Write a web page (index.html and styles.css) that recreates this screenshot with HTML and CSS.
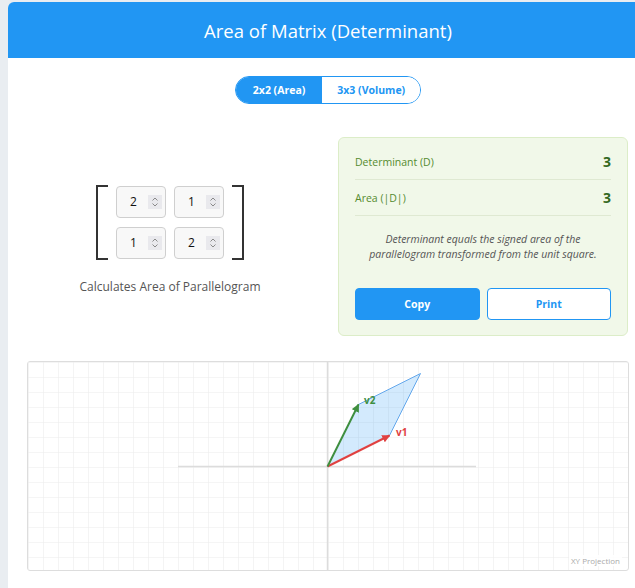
FILE: index.html
```html
<!DOCTYPE html>
<html lang="en">
<head>
<meta charset="utf-8">
<title>Area of Matrix (Determinant)</title>
<link rel="stylesheet" href="styles.css">
</head>
<body>
<div class="card">
  <header class="card-header">
    <h1 class="title">Area of Matrix (Determinant)</h1>
  </header>
  <div class="card-body">
    <div class="toggle-wrap">
      <div class="mode-toggle">
        <button class="mode active">2x2 (Area)</button>
        <button class="mode">3x3 (Volume)</button>
      </div>
    </div>

    <div class="main">
      <div class="matrix-col">
        <div class="matrix">
          <span class="bracket bracket-left"></span>
          <div class="cells">
            <div class="cell"><input class="cell-input" value="2"><span class="spin"><svg viewBox="0 0 14 14" width="14" height="14"><rect width="14" height="14" fill="#e9e9ed"/><path d="M4.5 5.5 L7 3 L9.5 5.5" fill="none" stroke="#8a8a8a" stroke-width="1"/><path d="M4.5 8.5 L7 11 L9.5 8.5" fill="none" stroke="#8a8a8a" stroke-width="1"/></svg></span></div>
            <div class="cell"><input class="cell-input" value="1"><span class="spin"><svg viewBox="0 0 14 14" width="14" height="14"><rect width="14" height="14" fill="#e9e9ed"/><path d="M4.5 5.5 L7 3 L9.5 5.5" fill="none" stroke="#8a8a8a" stroke-width="1"/><path d="M4.5 8.5 L7 11 L9.5 8.5" fill="none" stroke="#8a8a8a" stroke-width="1"/></svg></span></div>
            <div class="cell"><input class="cell-input" value="1"><span class="spin"><svg viewBox="0 0 14 14" width="14" height="14"><rect width="14" height="14" fill="#e9e9ed"/><path d="M4.5 5.5 L7 3 L9.5 5.5" fill="none" stroke="#8a8a8a" stroke-width="1"/><path d="M4.5 8.5 L7 11 L9.5 8.5" fill="none" stroke="#8a8a8a" stroke-width="1"/></svg></span></div>
            <div class="cell"><input class="cell-input" value="2"><span class="spin"><svg viewBox="0 0 14 14" width="14" height="14"><rect width="14" height="14" fill="#e9e9ed"/><path d="M4.5 5.5 L7 3 L9.5 5.5" fill="none" stroke="#8a8a8a" stroke-width="1"/><path d="M4.5 8.5 L7 11 L9.5 8.5" fill="none" stroke="#8a8a8a" stroke-width="1"/></svg></span></div>
          </div>
          <span class="bracket bracket-right"></span>
        </div>
        <p class="caption">Calculates Area of Parallelogram</p>
      </div>

      <div class="result">
        <div class="row"><span class="row-label">Determinant (D)</span><span class="row-value">3</span></div>
        <div class="row"><span class="row-label">Area (|D|)</span><span class="row-value">3</span></div>
        <p class="note">Determinant equals the signed area of the<br>parallelogram transformed from the unit square.</p>
        <div class="actions">
          <button class="btn btn-primary">Copy</button>
          <button class="btn btn-outline">Print</button>
        </div>
      </div>
    </div>

    <div class="graph">
      <svg class="graph-svg" viewBox="0 0 600 208" width="600" height="208">
        <defs>
          <pattern id="grid" width="15" height="15" patternUnits="userSpaceOnUse">
            <path d="M0 0 H15 M0 0 V15" fill="none" stroke="#ececec" stroke-width="1.2"/>
          </pattern>
          <marker id="arrRed" viewBox="0 0 10 10" refX="9" refY="5" markerWidth="4" markerHeight="4" orient="auto">
            <path d="M0 0 L10 5 L0 10 Z" fill="#e04141"/>
          </marker>
          <marker id="arrGreen" viewBox="0 0 10 10" refX="9" refY="5" markerWidth="4" markerHeight="4" orient="auto">
            <path d="M0 0 L10 5 L0 10 Z" fill="#3f8f3f"/>
          </marker>
        </defs>
        <rect x="0" y="0" width="600" height="208" fill="url(#grid)"/>
        <line x1="150" y1="104.5" x2="448" y2="104.5" stroke="#dcdcdc" stroke-width="1.5"/>
        <line x1="299.5" y1="0" x2="299.5" y2="208" stroke="#dcdcdc" stroke-width="1.5"/>
        <polygon points="299.5,104.5 361.5,73.5 392.5,11.5 330.5,42.5" fill="rgba(33,150,243,0.2)" stroke="#64a8ec" stroke-width="1"/>
        <line x1="299.5" y1="104.5" x2="361.5" y2="73.5" stroke="#e04141" stroke-width="2" marker-end="url(#arrRed)"/>
        <line x1="299.5" y1="104.5" x2="330.5" y2="42.5" stroke="#3f8f3f" stroke-width="2" marker-end="url(#arrGreen)"/>
        <text x="368" y="74" class="vec-label vec-red">v1</text>
        <text x="336" y="42" class="vec-label vec-green">v2</text>
      </svg>
      <span class="graph-label">XY Projection</span>
    </div>
  </div>
</div>
</body>
</html>
```

FILE: styles.css
```css
* { box-sizing: border-box; }

html, body {
  margin: 0;
  padding: 0;
}

body {
  background: #e9edf1;
  font-family: "Open Sans", "Noto Sans", sans-serif;
  color: #333;
  padding: 2px 0 0 8px;
  overflow: hidden;
}

.card {
  width: 640px;
  background: #ffffff;
  border-radius: 6px 6px 0 0;
  overflow: hidden;
  min-height: 600px;
}

.card-header {
  height: 56px;
  background: #2196f3;
  display: flex;
  align-items: center;
  justify-content: center;
}

.title {
  margin: 0;
  font-size: 18.5px;
  font-weight: 400;
  color: #ffffff;
}

.card-body {
  padding: 18px 20px 20px;
}

.toggle-wrap {
  display: flex;
  justify-content: center;
}

.mode-toggle {
  display: flex;
  border: 1px solid #2196f3;
  border-radius: 14px;
  overflow: hidden;
  height: 28px;
}

.mode {
  border: none;
  background: #ffffff;
  color: #2196f3;
  font-family: inherit;
  font-size: 10.5px;
  font-weight: 700;
  padding: 0 15px;
  height: 26px;
  cursor: pointer;
}

.mode.active {
  background: #2196f3;
  color: #ffffff;
  padding: 0 17px;
}

.main {
  margin-top: 33px;
  display: grid;
  grid-template-columns: 1fr 1fr;
  gap: 20px;
  align-items: center;
}

.matrix-col {
  display: flex;
  flex-direction: column;
  align-items: center;
  padding: 6px 6px 0 0;
}

.matrix {
  display: flex;
  align-items: stretch;
  gap: 8px;
}

.bracket {
  width: 12px;
  border: 2px solid #333333;
}

.bracket-left { border-right: none; }
.bracket-right { border-left: none; }

.cells {
  display: grid;
  grid-template-columns: 50px 50px;
  grid-auto-rows: 32px;
  gap: 9px 8px;
  padding: 1px 0;
}

.cell {
  height: 32px;
  display: flex;
  align-items: center;
  padding-right: 3px;
  background: #f8f8f8;
  border: 1px solid #cfcfcf;
  border-radius: 4px;
}

.cell-input {
  flex: 1;
  min-width: 0;
  width: 30px;
  border: none;
  background: transparent;
  text-align: center;
  font-family: inherit;
  font-size: 12px;
  color: #111;
  padding: 0 0 0 2px;
  outline: none;
}

.spin {
  display: flex;
  width: 14px;
  height: 14px;
}

.caption {
  margin: 18px 0 0;
  font-size: 12px;
  color: #555555;
}

.result {
  background: #f1f8e9;
  border: 1px solid #dcedc8;
  border-radius: 6px;
  padding: 6px 16px 15px;
}

.row {
  display: flex;
  justify-content: space-between;
  align-items: center;
  padding: 9px 0 8px;
  border-bottom: 1px solid #dfe9d2;
  line-height: 18px;
}

.row-label {
  font-size: 10.5px;
  color: #558b2f;
}

.row-value {
  font-size: 14px;
  font-weight: 700;
  color: #33691e;
}

.note {
  margin: 16px 0 0;
  text-align: center;
  font-size: 10.5px;
  line-height: 15px;
  font-style: italic;
  color: #555555;
}

.actions {
  margin-top: 26px;
  display: grid;
  grid-template-columns: 1fr 1fr;
  gap: 7px;
}

.btn {
  height: 32px;
  border-radius: 4px;
  font-family: inherit;
  font-size: 10.5px;
  font-weight: 700;
  cursor: pointer;
}

.btn-primary {
  background: #2196f3;
  border: 1px solid #2196f3;
  color: #ffffff;
}

.btn-outline {
  background: #ffffff;
  border: 1px solid #2196f3;
  color: #2196f3;
}

.graph {
  position: relative;
  margin: 25px -1px 0;
  width: 602px;
  height: 210px;
  border: 1px solid #dddddd;
  border-radius: 3px;
  background: #ffffff;
}

.graph-svg {
  display: block;
}

.vec-label {
  font-family: "Open Sans", sans-serif;
  font-size: 10px;
  font-weight: 700;
}

.vec-red { fill: #e04141; }
.vec-green { fill: #3f8f3f; }

.graph-label {
  position: absolute;
  right: 6px;
  bottom: 4px;
  font-size: 8px;
  color: #aaaaaa;
  background: rgba(255, 255, 255, 0.85);
  padding: 0 2px;
}
```
